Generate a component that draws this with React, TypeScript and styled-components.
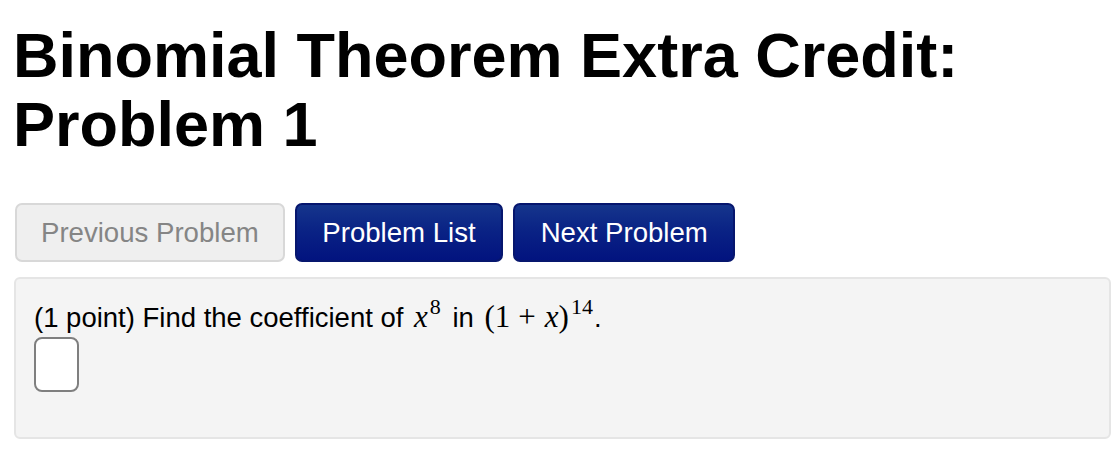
import React from 'react'
import styled, { createGlobalStyle } from 'styled-components'

const GlobalStyle = createGlobalStyle`
  html, body {
    margin: 0;
    padding: 0;
    background: #ffffff;
  }
  body {
    font-family: "Liberation Sans", Arial, Helvetica, sans-serif;
    color: #000;
  }
`

const Page = styled.div`
  padding: 21px 9px 0 13px;
`

const Title = styled.h1`
  margin: 0 0 44px 0;
  font-size: 63px;
  line-height: 69px;
  font-weight: 700;
`

const NavBar = styled.div`
  display: flex;
  gap: 10px;
  margin: 0 0 15px 2px;
`

const NavButton = styled.button<{ $disabled?: boolean }>`
  box-sizing: border-box;
  height: 59px;
  padding: 0 ${p => (p.$disabled ? 24 : 25.5)}px;
  font-family: "Liberation Sans", Arial, Helvetica, sans-serif;
  font-size: 27.6px;
  border-radius: 7px;
  cursor: ${p => (p.$disabled ? 'default' : 'pointer')};
  color: ${p => (p.$disabled ? '#858585' : '#ffffff')};
  border: 2px solid ${p => (p.$disabled ? '#d8d8d8' : '#06166e')};
  background: ${p =>
    p.$disabled
      ? '#efefef'
      : 'linear-gradient(to bottom, #15358c 0%, #0a2385 45%, #02137f 100%)'};
`

const Well = styled.div`
  box-sizing: border-box;
  margin-left: 1px;
  height: 162px;
  padding: 19px 18px 0 18px;
  background: #f4f4f4;
  border: 2px solid #e5e5e5;
  border-radius: 6px;
`

const Question = styled.div`
  font-size: 27.5px;
  line-height: 40px;
  height: 40px;
  white-space: nowrap;
`

const Math = styled.span<{ $after?: number }>`
  font-family: "Liberation Serif", "Times New Roman", serif;
  font-size: 31px;
  line-height: 1;
  margin-left: 3px;
  margin-right: ${p => p.$after ?? 0}px;
`

const Var = styled.i`
  font-style: italic;
`

const Op = styled.span`
  margin: 0 9px 0 8px;
`

const Sup = styled.sup`
  font-size: 22px;
  vertical-align: 13px;
  line-height: 0;
  margin-left: 2px;
`

const Answer = styled.input`
  box-sizing: border-box;
  display: block;
  width: 45px;
  height: 55px;
  margin: -1px 0 0 0;
  border: 2px solid #7f7f7f;
  border-radius: 8px;
  background: #ffffff;
  outline: none;
`

export default function App() {
  return (
    <Page>
      <GlobalStyle />
      <Title>
        Binomial Theorem Extra Credit:
        <br />
        Problem 1
      </Title>
      <NavBar>
        <NavButton $disabled>Previous Problem</NavButton>
        <NavButton>Problem List</NavButton>
        <NavButton>Next Problem</NavButton>
      </NavBar>
      <Well>
        <Question>
          (1 point) Find the coefficient of{' '}
          <Math $after={4}>
            <Var>x</Var>
            <Sup>8</Sup>
          </Math>{' '}
          in{' '}
          <Math $after={1}>
            (1<Op>+</Op>
            <Var>x</Var>)<Sup>14</Sup>
          </Math>
          .
        </Question>
        <Answer type="text" aria-label="answer" />
      </Well>
    </Page>
  )
}
